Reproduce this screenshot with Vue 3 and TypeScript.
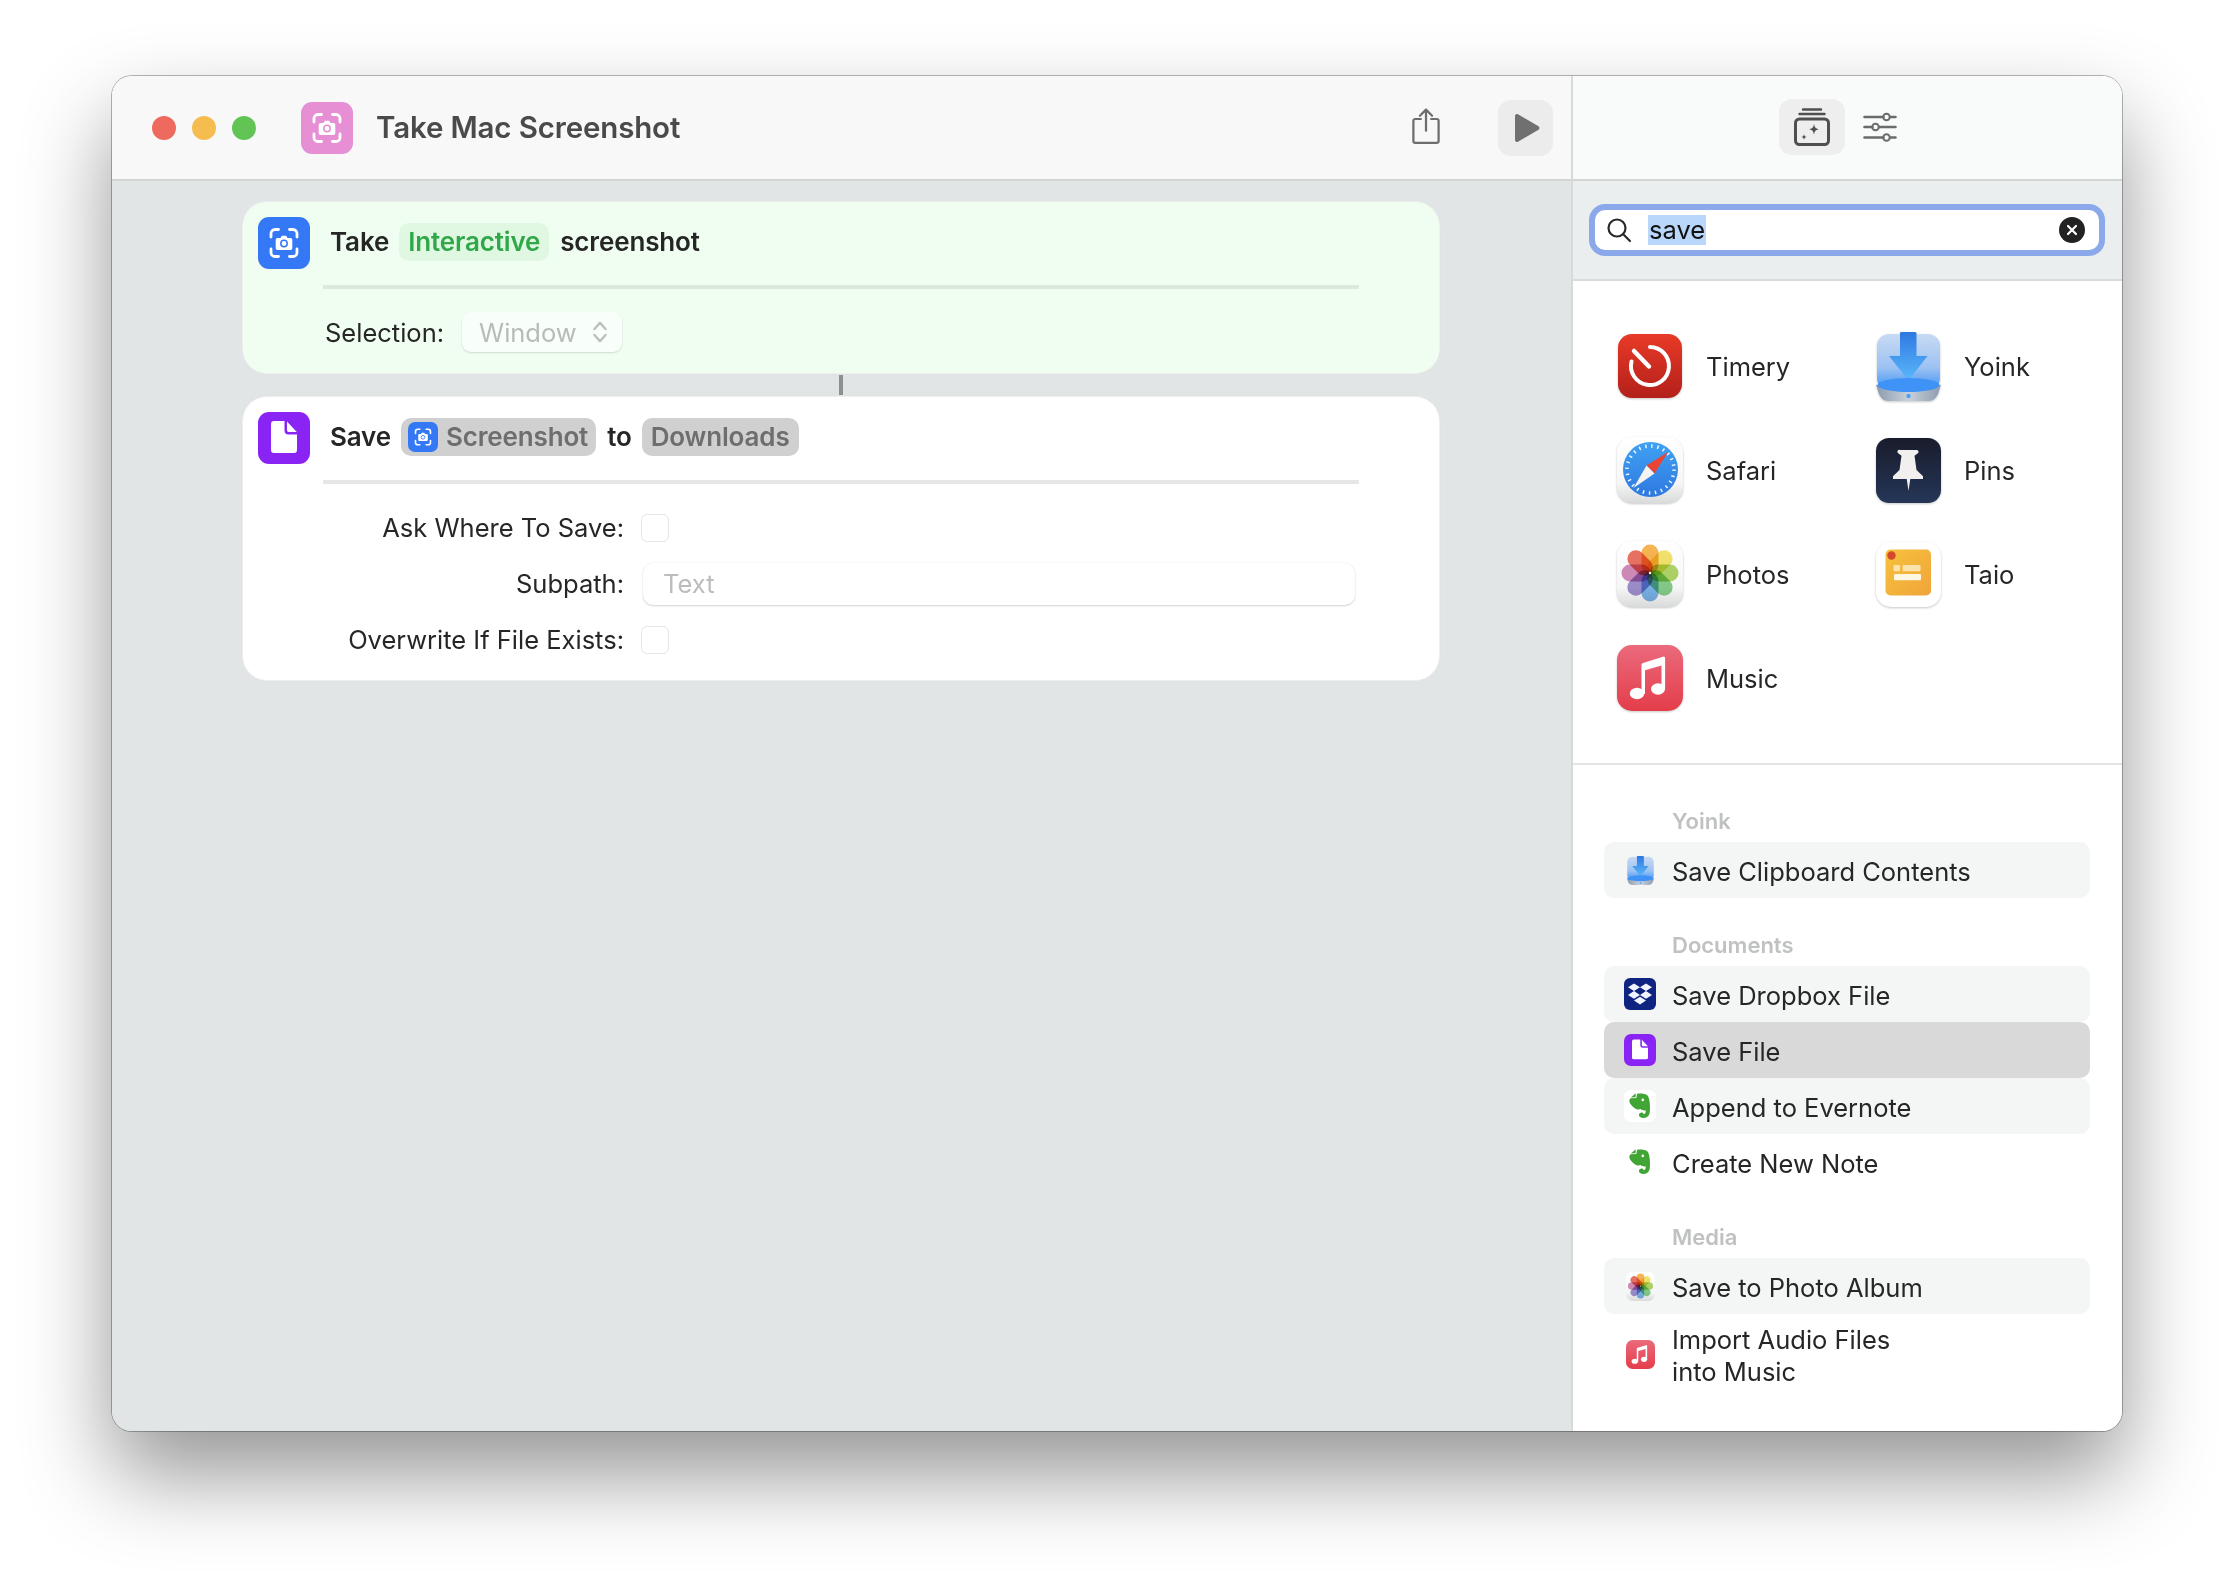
<template>
  <div class="stage">
    <!-- shared icon symbols -->
    <svg class="defs" aria-hidden="true">
      <defs>
        <linearGradient id="g-timery" x1="0" y1="0" x2="0" y2="1"><stop offset="0" stop-color="#e83a28" /><stop offset="1" stop-color="#b3201a" /></linearGradient>
        <linearGradient id="g-music" x1="0" y1="0" x2="0" y2="1"><stop offset="0" stop-color="#ea6a7c" /><stop offset="1" stop-color="#e43d4a" /></linearGradient>
        <linearGradient id="g-tile" x1="0" y1="0" x2="0" y2="1"><stop offset="0" stop-color="#ffffff" /><stop offset="0.7" stop-color="#f6f6f6" /><stop offset="1" stop-color="#d9dada" /></linearGradient>
        <linearGradient id="g-pins" x1="0" y1="0" x2="0" y2="1"><stop offset="0" stop-color="#191c2c" /><stop offset="1" stop-color="#253657" /></linearGradient>
        <linearGradient id="g-taio" x1="0" y1="0" x2="1" y2="1"><stop offset="0" stop-color="#f6c23d" /><stop offset="1" stop-color="#f0a43a" /></linearGradient>
        <linearGradient id="g-yoink" x1="0" y1="0" x2="0" y2="1"><stop offset="0" stop-color="#c8daf3" /><stop offset="0.6" stop-color="#9cc2f3" /><stop offset="1" stop-color="#3f92f4" /></linearGradient>
        <linearGradient id="g-arrow" x1="0" y1="0" x2="0" y2="1"><stop offset="0" stop-color="#2f78e0" /><stop offset="1" stop-color="#5ab8fb" /></linearGradient>
        <linearGradient id="g-base" x1="0" y1="0" x2="1" y2="0"><stop offset="0" stop-color="#8d9bae" /><stop offset="0.5" stop-color="#c9d1db" /><stop offset="1" stop-color="#8d9bae" /></linearGradient>
        <linearGradient id="g-compass" x1="0" y1="0" x2="0" y2="1"><stop offset="0" stop-color="#3fa2f3" /><stop offset="1" stop-color="#2f78e0" /></linearGradient>

        <symbol id="ic-shot" viewBox="0 0 52 52">
          <path d="M13 20v-3.5a4 4 0 0 1 4-4h3.5M31.500 12.500H35a4 4 0 0 1 4 4V20M39 32v3.500a4 4 0 0 1-4 4h-3.500M20.500 39.500H17a4 4 0 0 1-4-4V32" fill="none" stroke="#fff" stroke-width="2.800" stroke-linecap="round" />
          <path d="M19.500 21h3l1.300-2.200h4.400L29.500 21h3a1.800 1.800 0 0 1 1.800 1.800v8.400a1.800 1.800 0 0 1-1.800 1.800h-13a1.800 1.800 0 0 1-1.800-1.800v-8.400a1.800 1.800 0 0 1 1.800-1.800z" fill="#fff" />
          <circle cx="26" cy="26.500" r="3.200" fill="none" stroke="currentColor" stroke-width="1.500" />
        </symbol>

        <symbol id="ic-doc" viewBox="0 0 52 52">
          <path d="M16 9h10.500v9.500a4 4 0 0 0 4 4H39V38a3 3 0 0 1-3 3H16a3 3 0 0 1-3-3V12a3 3 0 0 1 3-3z" fill="#fff" />
          <path d="M29 9.500 38.800 20h-8a1.800 1.800 0 0 1-1.800-1.800z" fill="#fff" />
        </symbol>

        <symbol id="ic-timery" viewBox="0 0 64 64">
          <rect width="64" height="64" rx="14" fill="url(#g-timery)" />
          <path d="M32 13a19 19 0 1 1-18.500 14.500" fill="none" stroke="#fff" stroke-width="4" stroke-linecap="round" />
          <path d="M16 17 31 32.500" fill="none" stroke="#fff" stroke-width="4.500" stroke-linecap="round" />
        </symbol>

        <symbol id="ic-yoink" viewBox="0 0 65 69">
          <rect x="1" y="2" width="63" height="56" rx="12" fill="url(#g-yoink)" />
          <path d="M25 0h14a1.500 1.500 0 0 1 1.500 1.500V24h11L32.500 48.500 13 24h11V1.500A1.500 1.500 0 0 1 25 0z" fill="url(#g-arrow)" />
          <path d="M0 53c0 0 1 2 2 6 1 5 5 10 10 10h41c5 0 9-5 10-10 1-4 2-6 2-6z" fill="url(#g-base)" />
          <ellipse cx="32.500" cy="53" rx="31" ry="7" fill="#3f92f6" />
          <circle cx="32.500" cy="64" r="2.200" fill="#4f9ff0" />
        </symbol>

        <symbol id="ic-safari" viewBox="0 0 66 66">
          <rect width="66" height="66" rx="15" fill="url(#g-tile)" />
          <circle cx="33.500" cy="32.500" r="27.500" fill="url(#g-compass)" />
          <circle cx="33.500" cy="32.500" r="23.500" fill="none" stroke="#e8f3fd" stroke-width="3.600" stroke-dasharray="1.500 4.650" />
          <path d="M51 15 37.500 36.500 29.500 28.500z" fill="#ea4434" />
          <path d="M16.500 51 29.500 28.500 37.500 36.500z" fill="#f4f4f4" />
        </symbol>

        <symbol id="ic-pins" viewBox="0 0 65 65">
          <rect width="65" height="65" rx="13" fill="url(#g-pins)" />
          <path d="M24 12h17a1.800 1.800 0 0 1 .5 3.400l-3 2.300 2 14.300 6.500 6.300v2.700H34.300L32.500 53l-1.800-12H17v-2.700l6.500-6.300 2-14.300-3-2.300A1.800 1.800 0 0 1 24 12z" fill="#f1f0ee" />
        </symbol>

        <symbol id="ic-photos" viewBox="0 0 66 66">
          <rect width="66" height="66" rx="15" fill="url(#g-tile)" />
          <rect v-for="p in petals" :key="p.color" class="petal" x="24.500" y="3.500" width="17" height="29" rx="8.500" :fill="p.color" :transform="`rotate(${p.angle} 33 32)`" />
          <circle cx="33" cy="32" r="1.200" fill="#fff" />
        </symbol>

        <symbol id="ic-taio" viewBox="0 0 65 65">
          <rect width="65" height="65" rx="15" fill="#fff" />
          <rect x="9.500" y="7.500" width="45.500" height="46" rx="5" fill="url(#g-taio)" />
          <circle cx="15.500" cy="13.500" r="4.200" fill="#d4482c" />
          <rect x="17.500" y="23" width="6.500" height="6.300" rx="1" fill="#fbe3ab" />
          <rect x="26.500" y="23" width="18" height="6.300" rx="1" fill="#fbe3ab" />
          <rect x="18" y="32" width="27" height="6.300" rx="1" fill="#fff7e2" />
        </symbol>

        <symbol id="ic-music" viewBox="0 0 66 66">
          <rect width="66" height="66" rx="15" fill="url(#g-music)" />
          <path d="M24.500 19.800a2 2 0 0 1 1.500-1.900l20-6.200a1.600 1.600 0 0 1 2.100 1.500V44h-3.600V20.500L28 25.200V49h-3.500z" fill="#fff" />
          <ellipse cx="20" cy="48.500" rx="7.200" ry="5.800" fill="#fff" />
          <ellipse cx="41" cy="44" rx="7" ry="5.800" fill="#fff" />
        </symbol>

        <symbol id="ic-dropbox" viewBox="0 0 32 32">
          <rect width="32" height="32" rx="6" fill="#0f2480" />
          <path d="M10 5.500 16 9.300l-6 3.800L4 9.300zM22 5.500l6 3.800-6 3.800-6-3.800zM10 13.100l6 3.800-6 3.800-6-3.800zM22 13.100l6 3.800-6 3.800-6-3.800zM16 18.800l6 3.800-6 3.900-6-3.900z" fill="#f2f5ff" />
        </symbol>

        <symbol id="ic-note" viewBox="0 0 32 32">
          <path d="M13 4c1.500-1 8.500-.5 10.500 1.500 1.800 2 2.600 8 2.500 13 0 4.500-.6 7-3 8.500-2.600 1.600-7.500 1.300-8-1.500-.3-1.800 1-3 2.800-3 1.300 0 2 .8 1.800 1.800 1.600-.2 2.200-1.500 2.100-4-1.500.5-4 .2-5-1.200-1.500.8-4.200.7-6-.8C8.500 16.500 5.500 14 5.300 11c-.1-1.500.7-2.600 2-2.800L12.400 8z" fill="#41a535" />
          <path d="M6.800 7.500 11.800 3.300 11.600 7.200z" fill="#41a535" />
          <circle cx="18.800" cy="9.900" r="1.300" fill="#fff" />
        </symbol>
      </defs>
    </svg>

    <div class="window">
      <section class="main">
        <header class="titlebar">
          <div class="lights">
            <span class="light red"></span>
            <span class="light yellow"></span>
            <span class="light green"></span>
          </div>
          <span class="badge title-badge"><svg class="glyph"><use href="#ic-shot" /></svg></span>
          <h1 class="title">Take Mac Screenshot</h1>
          <svg class="share" viewBox="0 0 30 38" fill="none" stroke="#6d6d6d" stroke-width="2.400" stroke-linecap="round" stroke-linejoin="round">
            <path d="M9.500 11.500H3.500a2 2 0 0 0-2 2V35a2 2 0 0 0 2 2h23a2 2 0 0 0 2-2V13.500a2 2 0 0 0-2-2h-6" />
            <path d="M15 24V1.500M8.500 8 15 1.500 21.500 8" />
          </svg>
          <button class="play" type="button">
            <svg viewBox="0 0 26 30" width="26" height="30"><path d="M1 3a2 2 0 0 1 3-1.700l20.500 12a2 2 0 0 1 0 3.400L4 28.700A2 2 0 0 1 1 27z" fill="#707070" /></svg>
          </button>
        </header>

        <div class="editor">
          <article class="card green-card">
            <div class="card-head">
              <span class="badge blue"><svg class="glyph"><use href="#ic-shot" /></svg></span>
              <span class="head-word">Take</span>
              <span class="chip green-chip">Interactive</span>
              <span class="head-word">screenshot</span>
            </div>
            <div class="rule green-rule"></div>
            <div class="selection">
              <span class="selection-label">Selection:</span>
              <span class="dropdown">
                Window
                <svg viewBox="0 0 14 22" width="14" height="22" fill="none" stroke="#bcbfbc" stroke-width="2.400" stroke-linecap="round" stroke-linejoin="round">
                  <path d="M1.500 8 7 1.800 12.500 8M1.500 14 7 20.200 12.500 14" />
                </svg>
              </span>
            </div>
          </article>

          <div class="connector"></div>

          <article class="card">
            <div class="card-head">
              <span class="badge purple"><svg class="glyph"><use href="#ic-doc" /></svg></span>
              <span class="head-word">Save</span>
              <span class="chip grey-chip shot-chip">
                <span class="mini blue"><svg class="glyph"><use href="#ic-shot" /></svg></span>
                Screenshot
              </span>
              <span class="head-word">to</span>
              <span class="chip grey-chip">Downloads</span>
            </div>
            <div class="rule"></div>
            <div class="fields">
              <label class="field-label">Ask Where To Save:</label>
              <span class="check"></span>
              <label class="field-label">Subpath:</label>
              <span class="text-input">Text</span>
              <label class="field-label">Overwrite If File Exists:</label>
              <span class="check"></span>
            </div>
          </article>
        </div>
      </section>

      <aside class="side">
        <header class="side-bar">
          <button class="tool active" type="button">
            <svg viewBox="0 0 36 38" width="36" height="38" fill="none" stroke="#4f4f4f" stroke-width="2.400" stroke-linecap="round" stroke-linejoin="round">
              <path d="M9 1.500h18M5.500 6h25" />
              <rect x="1.500" y="11" width="33" height="25.500" rx="4" stroke-width="3" />
              <path d="M20 15.500c.5 4 1.500 5 5 5.700-3.500.7-4.500 1.800-5 5.800-.5-4-1.500-5.100-5-5.800 3.500-.7 4.500-1.700 5-5.700zM10 26c.3 2 .8 2.600 2.800 3-2 .4-2.500 1-2.800 3-.3-2-.8-2.600-2.800-3 2-.4 2.500-1 2.800-3z" fill="#4f4f4f" stroke="none" />
            </svg>
          </button>
          <button class="tool" type="button">
            <svg viewBox="0 0 34 30" width="34" height="30" fill="none" stroke="#6b6b6b" stroke-width="2.600" stroke-linecap="round">
              <path d="M1.500 5h19M27 5h5.500M1.500 15h8M16 15h16.500M1.500 25.500h19M27 25.500h5.500" />
              <circle cx="23.500" cy="5" r="3.300" stroke-width="2" />
              <circle cx="12.500" cy="15" r="3.300" stroke-width="2" />
              <circle cx="23.500" cy="25.500" r="3.300" stroke-width="2" />
            </svg>
          </button>
        </header>

        <div class="search-area">
          <div class="search">
            <svg viewBox="0 0 26 26" width="26" height="26" fill="none" stroke="#2a2a2a" stroke-width="2.200" stroke-linecap="round">
              <circle cx="11" cy="11" r="8.500" />
              <path d="M17.200 17.200 24 24" />
            </svg>
            <span class="query">save</span>
            <span class="clear">
              <svg viewBox="0 0 12 12" width="12" height="12" fill="none" stroke="#fff" stroke-width="2.200" stroke-linecap="round"><path d="M2 2l8 8M10 2l-8 8" /></svg>
            </span>
          </div>
        </div>

        <div class="apps">
          <div v-for="app in apps" :key="app.name" class="app">
            <span class="app-icon"><svg :style="{ width: app.w + 'px', height: app.h + 'px' }"><use :href="'#' + app.icon" /></svg></span>
            <span class="app-name">{{ app.name }}</span>
          </div>
        </div>

        <div class="lists">
          <section v-for="group in groups" :key="group.title" class="group">
            <h2 class="group-title">{{ group.title }}</h2>
            <div
              v-for="(row, i) in group.rows"
              :key="row.text"
              class="row"
              :class="{ striped: i % 2 === 0, picked: row.picked, tall: row.text.includes('\n') }"
            >
              <span class="row-icon">
                <span v-if="row.badge" class="row-badge" :class="row.badge"><svg class="glyph"><use :href="'#' + row.icon" /></svg></span>
                <svg v-else :style="{ width: row.size + 'px', height: row.size + 'px' }"><use :href="'#' + row.icon" /></svg>
              </span>
              <span class="row-text">{{ row.text }}</span>
            </div>
          </section>
        </div>
      </aside>
    </div>
  </div>
</template>

<script setup lang="ts">
interface AppItem {
  name: string
  icon: string
  w: number
  h: number
}

interface RowItem {
  text: string
  icon: string
  size?: number
  badge?: string
  picked?: boolean
}

const petals = [
  { color: '#f5a52b', angle: 0 },
  { color: '#f0dd4c', angle: 45 },
  { color: '#9fcc46', angle: 90 },
  { color: '#6cc571', angle: 135 },
  { color: '#5fa5e8', angle: 180 },
  { color: '#8a78c6', angle: 225 },
  { color: '#c873ac', angle: 270 },
  { color: '#e6533f', angle: 315 }
]

const apps: AppItem[] = [
  { name: 'Timery', icon: 'ic-timery', w: 64, h: 64 },
  { name: 'Yoink', icon: 'ic-yoink', w: 65, h: 69 },
  { name: 'Safari', icon: 'ic-safari', w: 66, h: 66 },
  { name: 'Pins', icon: 'ic-pins', w: 65, h: 65 },
  { name: 'Photos', icon: 'ic-photos', w: 66, h: 66 },
  { name: 'Taio', icon: 'ic-taio', w: 65, h: 65 },
  { name: 'Music', icon: 'ic-music', w: 66, h: 66 }
]

const groups: { title: string; rows: RowItem[] }[] = [
  {
    title: 'Yoink',
    rows: [{ text: 'Save Clipboard Contents', icon: 'ic-yoink', size: 29 }]
  },
  {
    title: 'Documents',
    rows: [
      { text: 'Save Dropbox File', icon: 'ic-dropbox', size: 32 },
      { text: 'Save File', icon: 'ic-doc', badge: 'purple', picked: true },
      { text: 'Append to Evernote', icon: 'ic-note', badge: 'white' },
      { text: 'Create New Note', icon: 'ic-note', size: 32 }
    ]
  },
  {
    title: 'Media',
    rows: [
      { text: 'Save to Photo Album', icon: 'ic-photos', size: 29 },
      { text: 'Import Audio Files\ninto Music', icon: 'ic-music', size: 29 }
    ]
  }
]
</script>

<style>
html,
body {
  margin: 0;
  background: #fff;
}
</style>

<style scoped>
.stage {
  box-sizing: border-box;
  width: 2234px;
  height: 1578px;
  padding: 76px 0 0 112px;
  background: #fff;
  font-family: Inter, "Liberation Sans", sans-serif;
  color: #262626;
  overflow: hidden;
}

.defs {
  position: absolute;
  width: 0;
  height: 0;
}

.window {
  display: flex;
  width: 2010px;
  height: 1355px;
  border-radius: 20px;
  overflow: hidden;
  box-shadow: 0 44px 88px rgba(0, 0, 0, 0.42), 0 0 0 1px rgba(0, 0, 0, 0.28);
}

.main {
  display: flex;
  flex-direction: column;
  width: 1459px;
}

.titlebar {
  box-sizing: border-box;
  display: flex;
  align-items: center;
  height: 105px;
  padding-left: 40px;
  background: #f8f8f8;
  border-bottom: 2px solid #d3d4d4;
}

.lights {
  display: flex;
  gap: 16px;
}

.light {
  width: 24px;
  height: 24px;
  border-radius: 50%;
}

.red { background: #ee6a5f; }
.yellow { background: #f5bd4f; }
.green { background: #61c454; }

.badge {
  flex: none;
  width: 52px;
  height: 52px;
  border-radius: 11px;
  color: #3478f6;
}

.glyph {
  display: block;
  width: 100%;
  height: 100%;
}

.title-badge {
  margin-left: 45px;
  background: #e78fd4;
  color: #e78fd4;
}

.title {
  margin: 0 0 2px 23px;
  font-size: 29.500px;
  font-weight: 600;
  letter-spacing: -0.15px;
  color: #4a4a4a;
}

.share {
  width: 28px;
  height: 38px;
  margin: 0 1px 3px auto;
}

.play {
  display: flex;
  align-items: center;
  justify-content: center;
  width: 55px;
  height: 56px;
  margin: 0 18px 0 57px;
  padding: 0 0 0 3px;
  border: 0;
  border-radius: 13px;
  background: #ececec;
}

.editor {
  flex: 1;
  display: flex;
  flex-direction: column;
  align-items: flex-start;
  padding: 21px 0 0 131px;
  background: #e2e5e5;
}

.card {
  box-sizing: border-box;
  width: 1196px;
  background: #fff;
  border-radius: 24px;
  box-shadow: 0 0 0 1px rgba(255, 255, 255, 0.5), 0 0 3px rgba(0, 0, 0, 0.06);
}

.green-card {
  background: #f0fef1;
}

.card-head {
  display: flex;
  align-items: center;
  padding: 15px 0 0 15px;
  font-size: 26px;
  font-weight: 600;
  letter-spacing: -0.15px;
}

.blue {
  background: #3478f6;
  color: #3478f6;
}

.purple {
  background: #8a24f5;
  color: #8a24f5;
}

.head-word {
  margin: 0 10px 3px 0;
}

.card-head > .badge {
  margin-right: 20px;
}

.chip {
  display: flex;
  align-items: center;
  height: 38px;
  margin: 0 11px 3px 0;
  padding: 0 9px;
  border-radius: 10px;
}

.green-chip {
  background: #e0f8e2;
  color: #30a84a;
}

.grey-chip {
  background: #d0d0d0;
  color: #6e6e6e;
}

.shot-chip {
  padding: 0 8px 0 7px;
  gap: 8px;
}

.mini {
  width: 30px;
  height: 30px;
  border-radius: 7px;
}

.rule {
  height: 4px;
  margin: 16px 80px 0 80px;
  background: #e6e6e6;
}

.green-rule {
  background: #dbe8dc;
}

.selection {
  display: flex;
  align-items: center;
  gap: 17px;
  padding: 23px 0 21px 82px;
  font-size: 25.500px;
}

.selection-label {
  width: 120px;
}

.dropdown {
  box-sizing: border-box;
  display: flex;
  align-items: center;
  justify-content: space-between;
  width: 160px;
  height: 40px;
  padding: 0 15px 0 17px;
  border-radius: 9px;
  background: #f8fefa;
  box-shadow: 0 1px 2px rgba(0, 0, 0, 0.14);
  color: #b8bcb8;
}

.connector {
  width: 4px;
  height: 20px;
  margin: 2px 0 2px 596px;
  background: #8d9090;
}

.fields {
  display: grid;
  grid-template-columns: 381px 1fr;
  column-gap: 17px;
  row-gap: 21px;
  align-items: center;
  padding: 30px 84px 26px 0;
  font-size: 25.500px;
  line-height: 28px;
}

.field-label {
  text-align: right;
}

.check {
  box-sizing: border-box;
  width: 28px;
  height: 28px;
  border: 1.500px solid #e6e6e6;
  border-radius: 6px;
  background: #fff;
}

.text-input {
  box-sizing: border-box;
  display: flex;
  align-items: center;
  height: 42px;
  margin-left: 2px;
  padding-left: 20px;
  border-radius: 10px;
  color: #bcbcbc;
  box-shadow: 0 1px 2px rgba(0, 0, 0, 0.16), 0 0 1px rgba(0, 0, 0, 0.12);
}

.side {
  flex: 1;
  display: flex;
  flex-direction: column;
  border-left: 2px solid #d8d9d9;
  background: #fff;
}

.side-bar {
  box-sizing: border-box;
  display: flex;
  align-items: center;
  justify-content: center;
  gap: 2px;
  height: 105px;
  padding: 0 3px 2px 0;
  background: #f9fafa;
  border-bottom: 2px solid #d3d4d4;
}

.tool {
  display: flex;
  align-items: center;
  justify-content: center;
  width: 66px;
  height: 56px;
  padding: 0;
  border: 0;
  border-radius: 13px;
  background: transparent;
}

.active {
  background: #eeeeee;
}

.search-area {
  padding: 23px 17px 23px 16px;
  background: #ebeeef;
  border-bottom: 2px solid #d8dadb;
}

.search {
  box-sizing: border-box;
  display: flex;
  align-items: center;
  height: 52px;
  padding: 0 14px 0 11px;
  border: 6px solid #8aa8ea;
  border-radius: 16px;
  background: #fff;
}

.query {
  margin-left: 16px;
  padding: 0 1px;
  line-height: 30px;
  background: #b9d6fb;
  font-size: 25.500px;
  color: #111;
}

.clear {
  display: flex;
  align-items: center;
  justify-content: center;
  width: 26px;
  height: 26px;
  margin-left: auto;
  border-radius: 50%;
  background: #222;
}

.apps {
  display: grid;
  grid-template-columns: 258px 1fr;
  grid-auto-rows: 104px;
  padding: 33px 0 33px 45px;
  border-bottom: 2px solid #e2e3e3;
}

.app {
  display: flex;
  align-items: center;
}

.app-icon {
  display: flex;
  align-items: center;
  justify-content: center;
  width: 64px;
  height: 70px;
  margin-right: 24px;
}

.app-icon svg {
  flex: none;
  display: block;
  filter: drop-shadow(0 1px 1px rgba(0, 0, 0, 0.22));
}

.app-name {
  font-size: 25.500px;
}

.petal {
  opacity: 0.82;
  mix-blend-mode: multiply;
}

.lists {
  padding: 33px 32px 0 31px;
}

.group {
  margin-bottom: 24px;
}

.group-title {
  margin: 0;
  height: 44px;
  padding-left: 68px;
  line-height: 46px;
  font-size: 22px;
  font-weight: 600;
  color: #c0c2c2;
}

.row {
  display: flex;
  align-items: center;
  height: 56px;
  padding-left: 20px;
  border-radius: 10px;
  font-size: 25.500px;
}

.striped {
  background: #f4f6f5;
}

.picked {
  background: #d9d9d9;
}

.tall {
  height: 80px;
}

.row-icon {
  display: flex;
  align-items: center;
  justify-content: center;
  width: 32px;
  height: 32px;
  margin-right: 16px;
}

.row-icon svg {
  display: block;
}

.row-badge {
  display: block;
  width: 32px;
  height: 32px;
  border-radius: 7px;
}

.row-badge.white {
  background: #fff;
}

.row-text {
  padding-top: 3px;
  white-space: pre-line;
  line-height: 32px;
}
</style>
